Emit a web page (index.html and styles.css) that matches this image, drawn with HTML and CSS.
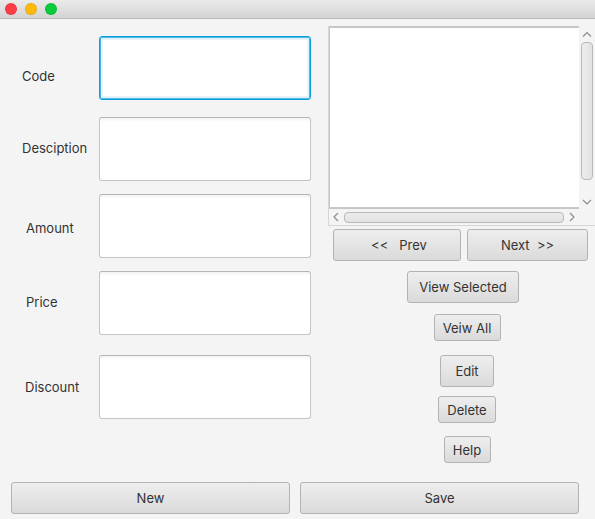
FILE: index.html
```html
<!DOCTYPE html>
<html lang="en">
<head>
  <meta charset="UTF-8">
  <title>Inventory</title>
  <link rel="stylesheet" href="styles.css">
</head>
<body>

  <div class="titlebar">
    <span class="light light-red"></span>
    <span class="light light-yellow"></span>
    <span class="light light-green"></span>
  </div>

  <div class="main">
    <div class="form">
      <div class="row row-code">
        <label class="label label-code">Code</label>
        <div class="field field-focus"></div>
      </div>
      <div class="row row-desc">
        <label class="label label-desc">Desciption</label>
        <div class="field"></div>
      </div>
      <div class="row row-amount">
        <label class="label label-amount">Amount</label>
        <div class="field"></div>
      </div>
      <div class="row row-price">
        <label class="label label-price">Price</label>
        <div class="field"></div>
      </div>
      <div class="row row-discount">
        <label class="label label-discount">Discount</label>
        <div class="field"></div>
      </div>
    </div>

    <div class="side">
      <div class="listbox">
        <div class="list-top">
          <div class="list-area"></div>
          <div class="vscroll">
            <svg class="arrow" width="16" height="14" viewBox="0 0 16 14"><path d="M4 8.5 8 4.5 12 8.5"/></svg>
            <div class="vthumb"></div>
            <svg class="arrow" width="16" height="14" viewBox="0 0 16 14"><path d="M4 5 8 9 12 5"/></svg>
          </div>
        </div>
        <div class="hscroll">
          <svg class="arrow" width="15" height="16" viewBox="0 0 15 16"><path d="M9 4 5 8 9 12"/></svg>
          <div class="hthumb"></div>
          <svg class="arrow" width="15" height="16" viewBox="0 0 15 16"><path d="M6 4 10 8 6 12"/></svg>
          <div class="corner"></div>
        </div>
      </div>

      <div class="pager">
        <button class="btn btn-prev">&lt;&lt;&nbsp;&nbsp; Prev</button>
        <button class="btn btn-next">Next &nbsp;&gt;&gt;</button>
      </div>

      <div class="actions">
        <button class="btn btn-selected">View Selected</button>
        <button class="btn btn-all">Veiw All</button>
        <button class="btn btn-edit">Edit</button>
        <button class="btn btn-delete">Delete</button>
        <button class="btn btn-help">Help</button>
      </div>
    </div>
  </div>

  <div class="footer">
    <button class="btn btn-wide">New</button>
    <button class="btn btn-wide">Save</button>
  </div>

</body>
</html>
```

FILE: styles.css
```css
* {
  box-sizing: border-box;
}

html, body {
  height: 100%;
}

body {
  margin: 0;
  display: flex;
  flex-direction: column;
  overflow: hidden;
  background: #f4f4f4;
  color: #333;
  font-family: "Inter", "Liberation Sans", sans-serif;
  font-size: 13px;
}

.titlebar {
  height: 19px;
  flex: none;
  display: flex;
  align-items: center;
  gap: 8px;
  padding: 0 0 1px 5px;
  background: linear-gradient(#ebebeb, #d3d3d3);
  border-bottom: 1px solid #b9b9b9;
}

.light {
  width: 12px;
  height: 12px;
  border-radius: 50%;
  border: 1px solid rgba(0, 0, 0, 0.08);
}

.light-red {
  background: #fc3d48;
}

.light-yellow {
  background: #fdb90e;
}

.light-green {
  background: #0ccb3d;
}

.main {
  flex: 1;
  display: flex;
}

.form {
  width: 328px;
  flex: none;
  padding-top: 17px;
}

.row {
  display: flex;
  align-items: center;
  height: 64px;
  margin-bottom: 13px;
}

.row-code {
  margin-bottom: 17px;
}

.row-price {
  margin-bottom: 20px;
}

.label {
  width: 99px;
  flex: none;
}

.label-code {
  padding: 16px 0 0 22px;
}

.label-desc {
  padding: 0 0 2px 22px;
}

.label-amount {
  padding: 4px 0 0 26px;
}

.label-price {
  padding: 0 0 2px 26px;
}

.label-discount {
  padding-left: 25px;
}

.field {
  width: 212px;
  height: 64px;
  background: linear-gradient(#f3f3f3, #fff 4px);
  border: 1px solid #c4c4c4;
  border-top-color: #b5b5b5;
  border-radius: 3px;
}

.field-focus {
  background: #fff;
  border: 1px solid #0aa0dc;
  box-shadow: inset 0 0 0 1px #4fb8e4, inset 0 0 0 3px #e6f3fa;
}

.side {
  flex: 1;
  padding-top: 7px;
}

.listbox {
  height: 200px;
  display: flex;
  flex-direction: column;
  border-left: 1px solid #d6d6d6;
  border-bottom: 1px solid #d6d6d6;
}

.list-top {
  flex: 1;
  display: flex;
  min-height: 0;
}

.list-area {
  flex: 1;
  background: #fff;
  border: 2px solid #c6c6c6;
  border-width: 2px 0 2px 1px;
}

.vscroll {
  width: 16px;
  flex: none;
  display: flex;
  flex-direction: column;
  align-items: center;
  padding-top: 2px;
  background: #f4f4f4;
}

.vthumb {
  width: 12px;
  height: 138px;
  margin-bottom: 15px;
  border: 1px solid #b9b9b9;
  border-radius: 4px;
  background: linear-gradient(90deg, #ececec, #e2e2e2);
}

.vscroll .arrow {
  flex: none;
}

.hscroll {
  height: 16px;
  flex: none;
  display: flex;
  align-items: center;
}

.hthumb {
  width: 220px;
  height: 11px;
  border: 1px solid #b9b9b9;
  border-radius: 4px;
  background: linear-gradient(#ececec, #e2e2e2);
}

.hscroll .arrow {
  flex: none;
}

.corner {
  flex: 1;
}

.arrow path {
  fill: none;
  stroke: #8e8e8e;
  stroke-width: 1.2;
}

.btn {
  display: block;
  padding: 0;
  font: inherit;
  color: #333;
  background: linear-gradient(#eeeeee, #dadada);
  border: 1px solid #b3b3b3;
  border-radius: 3px;
  white-space: nowrap;
}

.pager {
  display: flex;
  gap: 6px;
  margin: 3px 0 10px 5px;
}

.btn-prev {
  width: 128px;
  height: 32px;
  padding-left: 4px;
}

.btn-next {
  width: 121px;
  height: 32px;
}

.actions {
  display: flex;
  flex-direction: column;
  align-items: center;
  padding-left: 11px;
}

.btn-selected {
  width: 112px;
  height: 32px;
  margin: 0 8px 11px 0;
}

.btn-all {
  width: 67px;
  height: 27px;
  margin-bottom: 14px;
}

.btn-edit {
  width: 54px;
  height: 32px;
  margin-bottom: 9px;
}

.btn-delete {
  width: 58px;
  height: 27px;
  margin-bottom: 13px;
}

.btn-help {
  width: 47px;
  height: 27px;
}

.footer {
  flex: none;
  display: flex;
  gap: 10px;
  padding: 0 16px 5px 11px;
}

.btn-wide {
  flex: 1;
  height: 32px;
}
```
